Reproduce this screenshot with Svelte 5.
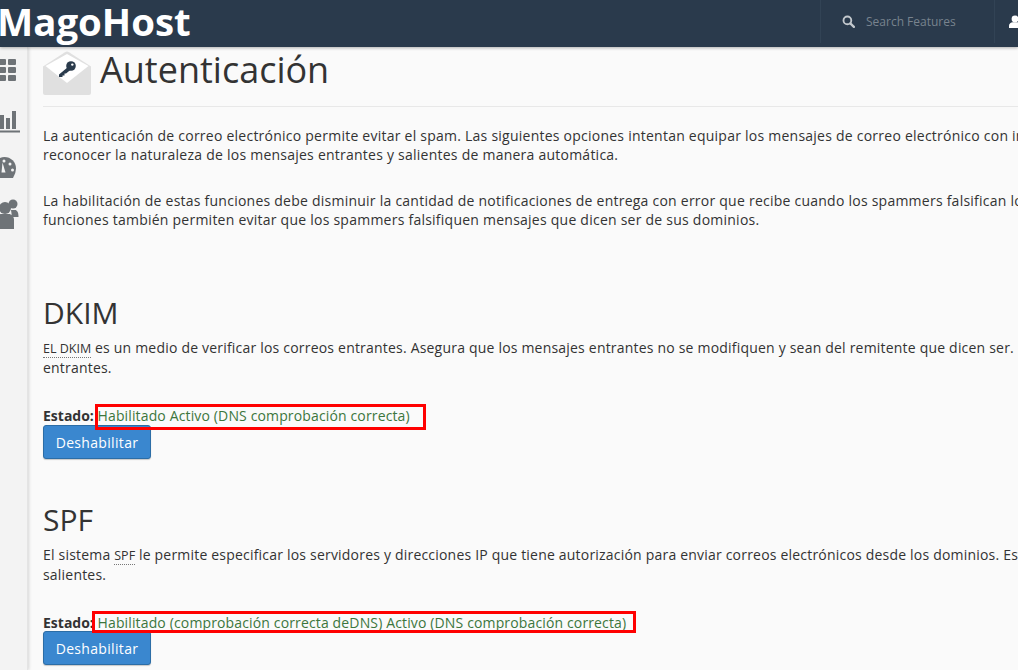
<script>
  const features = [
    {
      name: 'DKIM',
      abbr: 'EL DKIM',
      lead: ' es un medio de verificar los correos entrantes. Asegura que los mensajes entrantes no se modifiquen y sean del remitente que dicen ser. Esta función analiza',
      tail: 'entrantes.',
      status: 'Habilitado Activo (DNS comprobación correcta)'
    },
    {
      name: 'SPF',
      abbr: 'SPF',
      before: 'El sistema ',
      lead: ' le permite especificar los servidores y direcciones IP que tiene autorización para enviar correos electrónicos desde los dominios. Esto evita correos',
      tail: 'salientes.',
      status: 'Habilitado (comprobación correcta deDNS) Activo (DNS comprobación correcta)'
    }
  ];
</script>

<div class="page">
  <header class="topbar">
    <div class="brand">MagoHost</div>
    <div class="search">
      <svg class="search-icon" viewBox="0 0 14 14" width="13" height="13">
        <circle cx="5.8" cy="5.8" r="4.2" fill="none" stroke="#c3c8cd" stroke-width="2" />
        <path d="M9 9l3.8 3.8" stroke="#c3c8cd" stroke-width="2.4" stroke-linecap="round" />
      </svg>
      <span>Search Features</span>
    </div>
    <div class="user">
      <svg viewBox="0 0 14 14" width="14" height="14">
        <circle cx="7" cy="4" r="3.4" fill="#fff" />
        <path d="M1 13v-2.5c0-2 2-3 3.600-3.200h4.800c1.600.2 3.600 1.200 3.600 3.200v2.500z" fill="#fff" />
      </svg>
    </div>
  </header>

  <div class="body">
    <nav class="sidebar">
      <svg class="nav-grid" viewBox="0 0 28 24" width="28" height="24">
        <g fill="#6e7377">
          <rect x="-2" y="0" width="8" height="6" rx="1" /><rect x="8" y="0" width="8" height="6" rx="1" />
          <rect x="-2" y="8" width="8" height="6" rx="1" /><rect x="8" y="8" width="8" height="6" rx="1" />
          <rect x="-2" y="16" width="8" height="6" rx="1" /><rect x="8" y="16" width="8" height="6" rx="1" />
        </g>
      </svg>
      <svg class="nav-chart" viewBox="0 0 28 24" width="28" height="24">
        <g fill="#6e7377">
          <rect x="0" y="5" width="4" height="14" /><rect x="6" y="8" width="4" height="11" />
          <rect x="12" y="1" width="4" height="18" /><rect x="-2" y="20.500" width="22" height="2" />
        </g>
      </svg>
      <svg class="nav-gauge" viewBox="0 0 28 24" width="28" height="24">
        <path d="M-4 22Q-7 17-7 12.500a11.500 11.500 0 0 1 23 0Q16 17 13 22z" fill="#6e7377" />
        <g fill="#f3f3f3">
          <circle cx="4" cy="5" r="1.500" /><circle cx="10" cy="8" r="1.500" /><circle cx="12.500" cy="14" r="1.500" />
          <path d="M2.500 6.500l3 10h-4z" />
        </g>
      </svg>
      <svg class="nav-users" viewBox="0 0 28 30" width="28" height="30">
        <g fill="#6e7377">
          <circle cx="13" cy="5" r="4.500" /><circle cx="5" cy="9" r="6" />
          <path d="M11 11h4c2 0 3.500 2 3.500 7H12z" />
          <path d="M-4 30v-9c0-4 3-6 5-6h8c2 0 5 2 5 6v9z" />
        </g>
      </svg>
    </nav>

    <main class="content">
      <div class="title-row">
        <svg class="mail-icon" viewBox="0 0 48 44" width="48" height="44">
          <path d="M0 15.500L22 1.200q2-1.200 4 0L48 15.500V42a2 2 0 0 1-2 2H2a2 2 0 0 1-2-2z" fill="#e0e0e0" />
          <path d="M2.500 15L24 3l21.500 12L24 32z" fill="#fff" />
          <circle cx="28" cy="15" r="4.800" fill="#2a3b4c" />
          <path d="M25 16l-9 7.500v2.500h3.500v-1.500h2v-2h1.500l5-4z" fill="#2a3b4c" />
          <circle cx="29.300" cy="13.600" r="1.200" fill="#fff" />
        </svg>
        <h1>Autenticación</h1>
      </div>
      <hr />

      <p class="intro first">
        La autenticación de correo electrónico permite evitar el spam. Las siguientes opciones intentan equipar los mensajes de correo electrónico con información verificable<br />
        reconocer la naturaleza de los mensajes entrantes y salientes de manera automática.
      </p>
      <p class="intro second">
        La habilitación de estas funciones debe disminuir la cantidad de notificaciones de entrega con error que recibe cuando los spammers falsifican los mensajes<br />
        funciones también permiten evitar que los spammers falsifiquen mensajes que dicen ser de sus dominios.
      </p>

      {#each features as f, i}
        <section class="feature" class:spf={i === 1}>
          <h2>{f.name}</h2>
          <p class="desc">
            {f.before ?? ''}<abbr>{f.abbr}</abbr>{f.lead}<br />
            {f.tail}
          </p>
          <div class="status">
            <strong>Estado:</strong>
            <span class="ok">{f.status}</span>
            <span class="mark"></span>
          </div>
          <button type="button">Deshabilitar</button>
        </section>
      {/each}
    </main>
  </div>
</div>

<style>
  :global(body) {
    margin: 0;
    background: #fafafa;
    overflow: hidden;
  }

  .page {
    width: 1018px;
    height: 670px;
    overflow: hidden;
    font-family: "Open Sans", sans-serif;
    font-size: 14px;
    line-height: 19px;
    color: #333;
    background: #fafafa;
  }

  .topbar {
    position: relative;
    z-index: 2;
    display: flex;
    height: 47px;
    background: #2a3a4c;
    box-shadow: 0 1px 3px rgba(0, 0, 0, 0.3);
  }

  .brand {
    flex: 1;
    margin-left: -3px;
    font-size: 38.4px;
    font-weight: 700;
    line-height: 43px;
    color: #fff;
  }

  .search {
    display: flex;
    align-items: center;
    width: 175px;
    height: 43px;
    padding-left: 21px;
    box-sizing: border-box;
    gap: 11px;
    border-left: 1px solid #324355;
    border-right: 1px solid #324355;
    font-size: 12px;
    color: #78838e;
  }

  .user {
    width: 23px;
    box-sizing: border-box;
    padding: 14px 0 0 13px;
    overflow: hidden;
  }

  .body {
    display: flex;
  }

  .sidebar {
    display: flex;
    flex: none;
    flex-direction: column;
    width: 28px;
    height: 623px;
    padding-top: 12px;
    box-sizing: border-box;
    border-right: 1px solid #e4e4e4;
    background: #f3f3f3;
    box-shadow: 1px 0 3px rgba(0, 0, 0, 0.15);
    overflow: hidden;
  }

  .sidebar svg {
    flex: none;
    overflow: visible;
  }

  .nav-chart { margin-top: 27px; }
  .nav-gauge { margin-top: 22px; }
  .nav-users { margin-top: 19px; }

  .content {
    flex: 1;
    min-width: 0;
    padding-left: 15px;
    white-space: nowrap;
    overflow: hidden;
  }

  .title-row {
    display: flex;
    align-items: flex-start;
    gap: 9px;
    height: 59px;
    padding-top: 4px;
    box-sizing: border-box;
  }

  h1 {
    margin: -1px 0 0;
    font-size: 36px;
    font-weight: 400;
    line-height: 40px;
  }

  hr {
    margin: 0;
    border: 0;
    border-top: 1px solid #e8e8e8;
  }

  .intro {
    margin: 0;
    letter-spacing: 0.24px;
  }

  .first { padding-top: 19px; }
  .second { padding-top: 27px; }

  .feature {
    padding-top: 67px;
  }

  .feature.spf {
    padding-top: 44px;
  }

  h2 {
    margin: 0 0 9px;
    font-size: 30px;
    font-weight: 400;
    line-height: 33px;
  }

  .desc {
    margin: 0 0 29px;
    letter-spacing: 0.2px;
  }

  abbr {
    font-size: 12.500px;
    letter-spacing: 0;
    border-bottom: 1px dotted #777;
  }

  .status {
    position: relative;
  }

  .spf .status {
    margin-bottom: -1px;
  }

  .ok {
    color: #3c763d;
    letter-spacing: 0.14px;
  }

  .mark {
    position: absolute;
    left: 52px;
    top: -2px;
    width: 325px;
    height: 20px;
    border: 3px solid #f00;
  }

  .spf .mark {
    left: 49px;
    top: -2px;
    width: 538px;
    height: 16px;
  }

  button {
    display: block;
    width: 108px;
    height: 34px;
    padding: 0;
    border: 1px solid #2c6da6;
    border-radius: 3px;
    background: #3a87cf;
    box-shadow: 0 1px 1px rgba(0, 0, 0, 0.2);
    font: inherit;
    letter-spacing: 0.33px;
    color: #fff;
  }
</style>
